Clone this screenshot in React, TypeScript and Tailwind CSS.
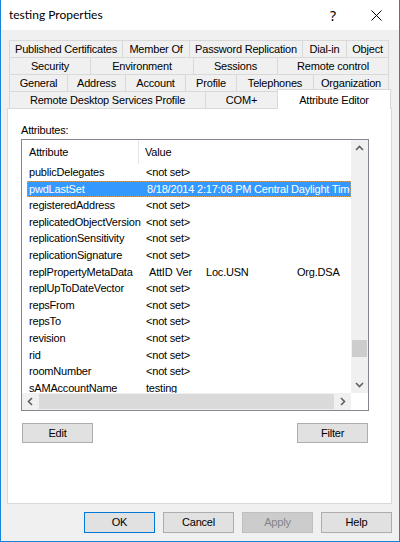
import React from 'react';

const tabRows: [string, number][][] = [
  [['Published Certificates', 113], ['Member Of', 67], ['Password Replication', 113], ['Dial-in', 44], ['Object', 43]],
  [['Security', 81], ['Environment', 103], ['Sessions', 84], ['Remote control', 112]],
  [['General', 58], ['Address', 58], ['Account', 60], ['Profile', 51], ['Telephones', 77], ['Organization', 76]],
];

const rows: [string, string][] = [
  ['publicDelegates', '<not set>'],
  ['pwdLastSet', '8/18/2014 2:17:08 PM Central Daylight Time'],
  ['registeredAddress', '<not set>'],
  ['replicatedObjectVersion', '<not set>'],
  ['replicationSensitivity', '<not set>'],
  ['replicationSignature', '<not set>'],
  ['replPropertyMetaData', 'META'],
  ['replUpToDateVector', '<not set>'],
  ['repsFrom', '<not set>'],
  ['repsTo', '<not set>'],
  ['revision', '<not set>'],
  ['rid', '<not set>'],
  ['roomNumber', '<not set>'],
  ['sAMAccountName', 'testing'],
];

const Chevron = ({ dir }: { dir: 'up' | 'down' | 'left' | 'right' }) => {
  const d = {
    up: 'M1 6 L4.5 2.5 L8 6',
    down: 'M1 3 L4.5 6.5 L8 3',
    left: 'M6 1 L2.5 4.5 L6 8',
    right: 'M3 1 L6.5 4.5 L3 8',
  }[dir];
  return (
    <svg width="9" height="9" viewBox="0 0 9 9">
      <path d={d} fill="none" stroke="#606060" strokeWidth="1.6" />
    </svg>
  );
};

const Button = ({ label, variant }: { label: string; variant?: 'default' | 'disabled' }) => {
  const cls =
    variant === 'default'
      ? 'border-[#0078d7] bg-[#e1e1e1] text-black'
      : variant === 'disabled'
        ? 'border-[#bfbfbf] bg-[#cccccc] text-[#838383]'
        : 'border-[#adadad] bg-[#e1e1e1] text-black';
  return (
    <div className={`w-[71px] h-[21px] border flex items-center justify-center text-[11px] ${cls}`}>{label}</div>
  );
};

export default function App() {
  return (
    <div
      className="w-[400px] h-[542px] bg-[#f0f0f0] border-l border-r border-b border-[#1883d7] flex flex-col overflow-hidden tracking-[-0.2px]"
      style={{ fontFamily: '"Liberation Sans", Arial, sans-serif' }}
    >
      {/* title bar */}
      <div className="h-[30px] bg-white flex items-center shrink-0 tracking-normal">
        <div className="pl-[8px] text-[12px] text-black flex-1" style={{ fontFamily: 'Lato, "Noto Sans", sans-serif' }}>
          testing Properties
        </div>
        <div className="w-[20px] text-[14px] text-black text-center mr-[10px]" style={{ fontFamily: '"Noto Sans", sans-serif' }}>?</div>
        <div className="w-[46px] flex justify-center">
          <svg width="11" height="11" viewBox="0 0 11 11">
            <path d="M0.5 0.5 L10.5 10.5 M10.5 0.5 L0.5 10.5" stroke="#000" strokeWidth="1" />
          </svg>
        </div>
      </div>

      {/* tabs */}
      <div className="pt-[10px] pl-[8px] flex flex-col text-[11px] text-black">
        {tabRows.map((row, i) => (
          <div key={i} className="flex h-[17px]">
            {row.map(([t, w], j) => (
              <div
                key={t}
                className={`h-[17px] border-t border-l border-[#d9d9d9] flex items-center justify-center whitespace-nowrap ${
                  j === row.length - 1 ? 'border-r' : ''
                }`}
                style={{ width: w }}
              >
                {t}
              </div>
            ))}
          </div>
        ))}
        <div className="flex h-[17px] items-end">
          <div className="w-[196px] h-[17px] border-t border-l border-[#d9d9d9] flex items-center justify-center whitespace-nowrap">
            Remote Desktop Services Profile
          </div>
          <div className="w-[72px] h-[17px] border-t border-l border-[#d9d9d9] flex items-center justify-center">
            COM+
          </div>
          <div className="w-[114px] h-[20px] -mb-px relative z-10 bg-white border-t border-l border-r border-[#d9d9d9] flex items-start pt-[2px] justify-center whitespace-nowrap">
            Attribute Editor
          </div>
        </div>
      </div>

      {/* panel */}
      <div className="ml-[6px] w-[385px] h-[396px] bg-white border border-[#d9d9d9] pl-[13px] pt-[14px] flex flex-col text-[11px] text-black shrink-0">
        <div className="h-[14px] leading-[14px]">Attributes:</div>
        <div className="mt-[2px] w-[348px] h-[272px] border border-[#828790] flex flex-col">
          <div className="flex h-[253px]">
            <div className="w-[329px] h-[253px] overflow-hidden flex flex-col">
              <div className="h-[24px] flex items-center shrink-0">
                <div className="w-[117px] h-[24px] pl-[7px] flex items-center border-r border-[#e5e5e5]">Attribute</div>
                <div className="pl-[6px]">Value</div>
              </div>
              {rows.map(([a, v], i) => {
                const sel = i === 1;
                return (
                  <div
                    key={a}
                    className={`ml-[5px] w-[324px] h-[16.6px] shrink-0 flex items-center whitespace-nowrap overflow-hidden ${
                      sel ? 'bg-[#3399ff] text-white border border-dotted border-[#d6a060]' : ''
                    }`}
                  >
                    <div className={`w-[119px] shrink-0 ${sel ? 'pl-[1px]' : 'pl-[2px]'}`}>{a}</div>
                    {v === 'META' ? (
                      <div className="flex pl-[3px]">
                        <span className="w-[27px]">AttID</span>
                        <span className="w-[30px]">Ver</span>
                        <span className="w-[91px]">Loc.USN</span>
                        <span>Org.DSA</span>
                      </div>
                    ) : (
                      <div>{v}</div>
                    )}
                  </div>
                );
              })}
            </div>
            <div className="w-[17px] h-[253px] bg-[#f0f0f0] flex flex-col">
              <div className="h-[17px] flex items-center justify-center">
                <Chevron dir="up" />
              </div>
              <div className="h-[183px]" />
              <div className="h-[17px] mx-px bg-[#cdcdcd]" />
              <div className="flex-1" />
              <div className="h-[17px] flex items-center justify-center">
                <Chevron dir="down" />
              </div>
            </div>
          </div>
          <div className="flex h-[17px]">
            <div className="w-[329px] h-[17px] bg-[#f0f0f0] flex items-center">
              <div className="w-[17px] h-[17px] flex items-center justify-center">
                <Chevron dir="left" />
              </div>
              <div className="flex-1 h-[15px] bg-[#dadada]" />
              <div className="w-[17px] h-[17px] flex items-center justify-center">
                <Chevron dir="right" />
              </div>
            </div>
            <div className="w-[17px] h-[17px] bg-white" />
          </div>
        </div>
        <div className="mt-[12px] w-[348px] flex justify-between">
          <div className="ml-px">
            <div className="w-[71px] h-[20px] border border-[#adadad] bg-[#e1e1e1] flex items-center justify-center">Edit</div>
          </div>
          <div className="mr-px">
            <div className="w-[71px] h-[20px] border border-[#adadad] bg-[#e1e1e1] flex items-center justify-center">Filter</div>
          </div>
        </div>
      </div>

      {/* bottom buttons */}
      <div className="mt-[8px] pl-[83px] flex gap-[8px]">
        <Button label="OK" variant="default" />
        <Button label="Cancel" />
        <Button label="Apply" variant="disabled" />
        <Button label="Help" />
      </div>
    </div>
  );
}
